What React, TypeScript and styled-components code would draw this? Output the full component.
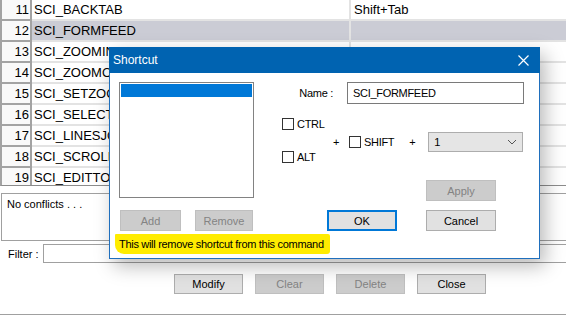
import styled, { createGlobalStyle } from 'styled-components';

const GlobalStyle = createGlobalStyle`
  html, body {
    margin: 0;
    padding: 0;
    background: #fff;
    overflow: hidden;
  }
  body {
    font-family: "Liberation Sans", Arial, sans-serif;
    color: #000;
  }
`;

interface Command {
  num: number;
  name: string;
  keys: string;
}

const commands: Command[] = [
  { num: 11, name: 'SCI_BACKTAB', keys: 'Shift+Tab' },
  { num: 12, name: 'SCI_FORMFEED', keys: '' },
  { num: 13, name: 'SCI_ZOOMIN', keys: 'Ctrl+Num +' },
  { num: 14, name: 'SCI_ZOOMOUT', keys: '' },
  { num: 15, name: 'SCI_SETZOOM', keys: '' },
  { num: 16, name: 'SCI_SELECTIONDUPLICATE', keys: '' },
  { num: 17, name: 'SCI_LINESJOIN', keys: '' },
  { num: 18, name: 'SCI_SCROLLCARET', keys: '' },
  { num: 19, name: 'SCI_EDITTOGGLEOVERTYPE', keys: '' },
];

const Page = styled.div`
  position: relative;
  width: 566px;
  height: 315px;
  display: flex;
  flex-direction: column;
  overflow: hidden;
`;

const Grid = styled.div`
  height: 186px;
  box-sizing: border-box;
  border-left: 2px solid #a3a3a3;
  border-bottom: 1px solid #8c8c8c;
  overflow: hidden;
`;

const GridRow = styled.div<{ selected?: boolean }>`
  display: grid;
  grid-template-columns: 30px 319px 1fr;
  height: 21px;
  font-size: 13px;
  line-height: 19px;

  & > div:not(:first-child) {
    background: ${p => (p.selected ? '#cbccd5' : '#fff')};
  }
`;

const NumCell = styled.div`
  background: #f9f9f9;
  border-right: 2px solid #a3a3a3;
  border-bottom: 2px solid #a3a3a3;
  text-align: right;
  padding-right: 1px;
`;

const NameCell = styled.div`
  border-bottom: 2px solid #e3e3e3;
  border-right: 2px solid #e3e3e3;
  padding-left: 2px;
  white-space: nowrap;
  overflow: hidden;
`;

const KeyCell = styled.div`
  border-bottom: 2px solid #e3e3e3;
  padding-left: 3px;
  white-space: nowrap;
`;

const ConflictBox = styled.div`
  margin: 7px 0 0 1px;
  height: 48px;
  box-sizing: border-box;
  border: 1px solid #a0a0a0;
  border-right: none;
  padding: 4px 5px;
  font-size: 11px;
`;

const FilterRow = styled.div`
  display: flex;
  align-items: center;
  margin-top: 3px;
  height: 19px;
`;

const FilterLabel = styled.span`
  font-size: 11px;
  width: 35px;
  padding-left: 8px;
`;

const FilterInput = styled.div`
  flex: 1;
  height: 19px;
  box-sizing: border-box;
  border: 1px solid #a0a0a0;
  border-right: none;
`;

const ButtonBar = styled.div`
  display: flex;
  gap: 12px;
  margin-top: 11px;
  padding-left: 174px;
`;

const Button = styled.button<{ w?: number; h?: number; primary?: boolean }>`
  width: ${p => p.w ?? 69}px;
  height: ${p => p.h ?? 20}px;
  box-sizing: border-box;
  padding: 0;
  font-family: inherit;
  font-size: 11px;
  color: #000;
  background: #e1e1e1;
  border: ${p => (p.primary ? '2px solid #0078d7' : '1px solid #adadad')};

  &:disabled {
    background: #cccccc;
    border: 1px solid #bfbfbf;
    color: #838383;
  }
`;

const BottomRule = styled.div`
  margin-top: auto;
  border-top: 1px solid #a0a0a0;
`;

const Dialog = styled.div`
  position: absolute;
  left: 109px;
  top: 47px;
  width: 431px;
  height: 212px;
  box-sizing: border-box;
  background: #fff;
  border: 1px solid #1f6fbd;
  border-top: none;
  box-shadow: 5px 7px 18px rgba(0, 0, 0, 0.28);
  display: flex;
  flex-direction: column;
`;

const TitleBar = styled.div`
  height: 26px;
  background: #0063b1;
  margin: 0 -1px;
  display: flex;
  align-items: center;
  justify-content: space-between;
  padding: 0 11px 0 4px;
  color: #fff;
  font-size: 12px;
`;

const DialogBody = styled.div`
  padding: 9px 0 0 9px;
  font-size: 11px;
  letter-spacing: -0.3px;
`;

const TopRow = styled.div`
  display: flex;
  align-items: flex-start;
`;

const ListBox = styled.div`
  width: 135px;
  height: 116px;
  box-sizing: border-box;
  border: 1px solid #828282;
  padding: 1px;
`;

const ListItem = styled.div`
  height: 13px;
  background: #0078d7;
`;

const RightPanel = styled.div`
  margin-left: 28px;
  width: 242px;
  display: flex;
  flex-direction: column;
`;

const NameRow = styled.div`
  display: flex;
  justify-content: flex-end;
  align-items: center;
  gap: 14px;
  height: 22px;
`;

const TextBox = styled.div`
  width: 177px;
  height: 22px;
  box-sizing: border-box;
  border: 1px solid #7a7a7a;
  padding-left: 5px;
  line-height: 20px;
`;

const KeysRow = styled.div`
  display: flex;
  align-items: center;
  margin-top: 13px;
  height: 46px;
`;

const ModColumn = styled.div`
  width: 47px;
  height: 46px;
  display: flex;
  flex-direction: column;
  justify-content: space-between;
`;

const CheckRow = styled.label<{ offset?: number }>`
  display: flex;
  align-items: center;
  gap: 3px;
  margin-left: ${p => p.offset ?? 0}px;
  height: 13px;
`;

const CheckBox = styled.span`
  width: 12px;
  height: 12px;
  box-sizing: border-box;
  border: 1px solid #333;
  background: #fff;
`;

const ComboGroup = styled.div`
  display: flex;
  align-items: center;
  padding-top: 4px;
`;

const Plus = styled.span<{ offset?: number }>`
  width: 14px;
  text-align: center;
  margin-left: ${p => p.offset ?? 0}px;
`;

const Combo = styled.div`
  margin-left: 9px;
  width: 95px;
  height: 20px;
  box-sizing: border-box;
  background: #e5e5e5;
  border: 1px solid #adadad;
  display: flex;
  align-items: center;
  justify-content: space-between;
  padding: 0 5px 0 5px;
`;

const ApplyRow = styled.div`
  display: flex;
  justify-content: flex-end;
  padding-right: 28px;
  margin-top: 17px;
`;

const DialogButtons = styled.div`
  display: flex;
  margin-top: 9px;
`;

const Gap = styled.span<{ w: number }>`
  width: ${p => p.w}px;
  flex: none;
`;

const Note = styled.div`
  margin-top: 3px;
`;

const Highlight = styled.span`
  display: inline-block;
  margin-left: -4px;
  padding: 3px 6px 2px 4px;
  background: #ffec00;
  border-radius: 1px 2px 3px 9px;
  line-height: 15px;
`;

const Chevron = () => (
  <svg width="10" height="6" viewBox="0 0 10 6">
    <path d="M1 1 L5 5 L9 1" fill="none" stroke="#555" strokeWidth="1" />
  </svg>
);

const CloseIcon = () => (
  <svg width="11" height="11" viewBox="0 0 11 11">
    <path d="M0.5 0.5 L10.5 10.5 M10.5 0.5 L0.5 10.5" stroke="#fff" strokeWidth="1.2" />
  </svg>
);

export default function App() {
  return (
    <>
      <GlobalStyle />
      <Page>
        <Grid>
          {commands.map(c => (
            <GridRow key={c.num} selected={c.num === 12}>
              <NumCell>{c.num}</NumCell>
              <NameCell>{c.name}</NameCell>
              <KeyCell>{c.keys}</KeyCell>
            </GridRow>
          ))}
        </Grid>

        <ConflictBox>No conflicts . . .</ConflictBox>

        <FilterRow>
          <FilterLabel>Filter :</FilterLabel>
          <FilterInput />
        </FilterRow>

        <ButtonBar>
          <Button>Modify</Button>
          <Button disabled>Clear</Button>
          <Button disabled>Delete</Button>
          <Button>Close</Button>
        </ButtonBar>

        <BottomRule />

        <Dialog>
          <TitleBar>
            <span>Shortcut</span>
            <CloseIcon />
          </TitleBar>
          <DialogBody>
            <TopRow>
              <ListBox>
                <ListItem />
              </ListBox>
              <RightPanel>
                <NameRow>
                  <span>Name :</span>
                  <TextBox>SCI_FORMFEED</TextBox>
                </NameRow>
                <KeysRow>
                  <ModColumn>
                    <CheckRow>
                      <CheckBox />
                      CTRL
                    </CheckRow>
                    <CheckRow>
                      <CheckBox />
                      ALT
                    </CheckRow>
                  </ModColumn>
                  <ComboGroup>
                    <Plus>+</Plus>
                    <CheckRow offset={6}>
                      <CheckBox />
                      SHIFT
                    </CheckRow>
                    <Plus offset={11}>+</Plus>
                    <Combo>
                      <span>1</span>
                      <Chevron />
                    </Combo>
                  </ComboGroup>
                </KeysRow>
                <ApplyRow>
                  <Button w={70} h={21} disabled>Apply</Button>
                </ApplyRow>
              </RightPanel>
            </TopRow>
            <DialogButtons>
              <Gap w={1} />
              <Button w={61} h={21} disabled>Add</Button>
              <Gap w={14} />
              <Button w={58} h={21} disabled>Remove</Button>
              <Gap w={74} />
              <Button w={70} h={21} primary>OK</Button>
              <Gap w={29} />
              <Button w={70} h={21}>Cancel</Button>
            </DialogButtons>
            <Note>
              <Highlight>This will remove shortcut from this command</Highlight>
            </Note>
          </DialogBody>
        </Dialog>
      </Page>
    </>
  );
}
